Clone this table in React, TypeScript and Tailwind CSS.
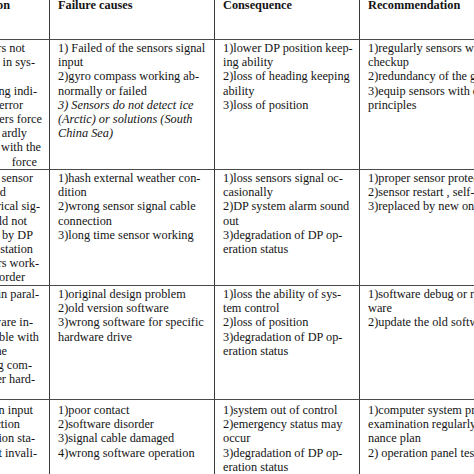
import React from 'react';

type Line = { t: string; i?: boolean };
type Row = {
  h: string;
  pt: string;
  c1: [string, string][];
  c2: Line[];
  c3: string[];
  c4: string[];
};

const rows: Row[] = [
  {
    h: 'h-[130px]',
    pt: 'pt-[1px]',
    c1: [
      ['Position sensors not', 'pr-[24px]'],
      ['signal in sys-', 'pr-[14px]'],
      ['\u00a0', 'pr-[14px]'],
      ['wrong indi-', 'pr-[12px]'],
      ['cation error', 'pr-[26px]'],
      ['thrusters force', 'pr-[7px]'],
      ['ardly', 'pr-[22px]'],
      ['match with the', 'pr-[8px]'],
      ['force', 'pr-[12px]'],
    ],
    c2: [
      { t: '1) Failed of the sensors signal' },
      { t: 'input' },
      { t: '2)gyro compass working ab-' },
      { t: 'normally or failed' },
      { t: '3) Sensors do not detect ice', i: true },
      { t: '(Arctic) or solutions (South', i: true },
      { t: 'China Sea)', i: true },
    ],
    c3: ['1)lower DP position keep-', 'ing ability', '2)loss of heading keeping', 'ability', '3)loss of position'],
    c4: [
      '1)regularly sensors working status',
      'checkup',
      '2)redundancy of the gyro compass',
      '3)equip sensors with different',
      'principles',
    ],
  },
  {
    h: 'h-[116px]',
    pt: 'pt-[1px]',
    c1: [
      ['one sensor', 'pr-[16px]'],
      ['failed', 'pr-[43px]'],
      ['electrical sig-', 'pr-[9px]'],
      ['nal could not', 'pr-[22px]'],
      ['be used by DP', 'pr-[16px]'],
      ['system station', 'pr-[16px]'],
      ['sensors work-', 'pr-[10px]'],
      ['ing disorder', 'pr-[24px]'],
    ],
    c2: [
      { t: '1)hash external weather con-' },
      { t: 'dition' },
      { t: '2)wrong sensor signal cable' },
      { t: 'connection' },
      { t: '3)long time sensor working' },
    ],
    c3: [
      '1)loss sensors signal oc-',
      'casionally',
      '2)DP system alarm sound',
      'out',
      '3)degradation of DP op-',
      'eration status',
    ],
    c4: ['1)proper sensor protection', '2)sensor restart , self-check', '3)replaced by new one'],
  },
  {
    h: 'h-[114px]',
    pt: 'pt-[1px]',
    c1: [
      ['run in paral-', 'pr-[10px]'],
      ['\u00a0', 'pr-[10px]'],
      ['software in-', 'pr-[16px]'],
      ['compatible with', 'pr-[10px]'],
      ['the', 'pr-[42px]'],
      ['existing com-', 'pr-[17px]'],
      ['puter hard-', 'pr-[14px]'],
    ],
    c2: [
      { t: '1)original design problem' },
      { t: '2)old version software' },
      { t: '3)wrong software for specific' },
      { t: 'hardware drive' },
    ],
    c3: ['1)loss the ability of sys-', 'tem control', '2)loss of position', '3)degradation of DP op-', 'eration status'],
    c4: ['1)software debug or replace soft-', 'ware', '2)update the old software'],
  },
  {
    h: 'h-[90px]',
    pt: 'pt-[3px]',
    c1: [
      ['Position input', 'pr-[16px]'],
      ['function', 'pr-[29px]'],
      ['position sta-', 'pr-[14px]'],
      ['tus result invali-', 'pr-[12px]'],
    ],
    c2: [
      { t: '1)poor contact' },
      { t: '2)software disorder' },
      { t: '3)signal cable damaged' },
      { t: '4)wrong software operation' },
    ],
    c3: ['1)system out of control', '2)emergency status may', 'occur', '3)degradation of DP op-', 'eration status'],
    c4: [
      '1)computer system protection and',
      'examination regularly, mainte-',
      'nance plan',
      '2) operation panel test',
    ],
  },
];

const grid = 'grid grid-cols-[50px_165px_145px_1fr]';

const App = () => {
  return (
    <div className="w-[474px] h-[474px] overflow-hidden bg-white text-[#141414] font-['Liberation_Serif',serif] text-[12.3px] leading-[14.2px]">
      <div className="-mt-[2px]">
        <div className={`${grid} h-[42px] border-b border-[#4a4a4a] font-bold`}>
          <div className="border-r border-[#3a3a3a] overflow-hidden">
            <div className="flex justify-end pr-[39px]">
              <span className="whitespace-nowrap">Description</span>
            </div>
          </div>
          <div className="border-r border-[#3a3a3a] pl-[8px] whitespace-nowrap">Failure causes</div>
          <div className="border-r border-[#3a3a3a] pl-[8px] whitespace-nowrap">Consequence</div>
          <div className="pl-[8px] whitespace-nowrap overflow-hidden">Recommendation</div>
        </div>

        {rows.map((r, idx) => (
          <div key={idx} className={`${grid} ${r.h} border-b border-[#4a4a4a]`}>
            <div className={`border-r border-[#3a3a3a] overflow-hidden ${r.pt}`}>
              {r.c1.map(([t, pr], i) => (
                <div key={i} className={`flex justify-end ${pr}`}>
                  <span className="whitespace-nowrap">{t}</span>
                </div>
              ))}
            </div>
            <div className={`border-r border-[#3a3a3a] pl-[8px] ${r.pt}`}>
              {r.c2.map((l, i) => (
                <div key={i} className={l.i ? 'whitespace-nowrap italic' : 'whitespace-nowrap'}>
                  {l.t}
                </div>
              ))}
            </div>
            <div className={`border-r border-[#3a3a3a] pl-[8px] ${r.pt}`}>
              {r.c3.map((t, i) => (
                <div key={i} className="whitespace-nowrap">
                  {t}
                </div>
              ))}
            </div>
            <div className={`pl-[8px] overflow-hidden ${r.pt}`}>
              {r.c4.map((t, i) => (
                <div key={i} className="whitespace-nowrap">
                  {t}
                </div>
              ))}
            </div>
          </div>
        ))}
      </div>
    </div>
  );
};

export default App;
